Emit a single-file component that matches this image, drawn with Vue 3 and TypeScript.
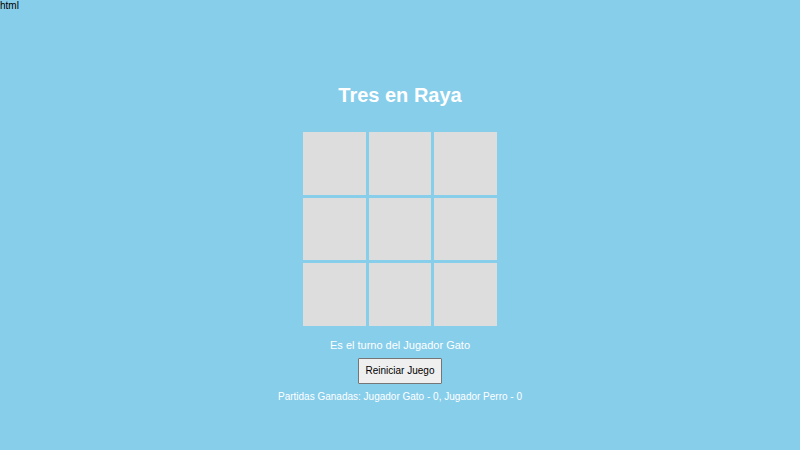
<script setup lang="ts">
import { ref, computed } from 'vue'

type Player = 'Gato' | 'Perro'

const lines = [
  [0, 1, 2], [3, 4, 5], [6, 7, 8],
  [0, 3, 6], [1, 4, 7], [2, 5, 8],
  [0, 4, 8], [2, 4, 6],
]
const symbols: Record<Player, string> = { Gato: '🐱', Perro: '🐶' }

const board = ref<(Player | null)[]>(Array(9).fill(null))
const turn = ref<Player>('Gato')
const winner = ref<Player | null>(null)
const wins = ref<Record<Player, number>>({ Gato: 0, Perro: 0 })

const message = computed(() => {
  if (winner.value) return `¡Jugador ${winner.value} ha ganado!`
  if (board.value.every((cell) => cell)) return '¡Empate!'
  return `Es el turno del Jugador ${turn.value}`
})

function play(index: number) {
  if (board.value[index] || winner.value) return
  board.value[index] = turn.value
  if (lines.some((line) => line.every((i) => board.value[i] === turn.value))) {
    winner.value = turn.value
    wins.value[turn.value]++
    return
  }
  turn.value = turn.value === 'Gato' ? 'Perro' : 'Gato'
}

function reset() {
  board.value = Array(9).fill(null)
  turn.value = 'Gato'
  winner.value = null
}
</script>

<template>
  <div class="page">
    <div class="corner">html</div>
    <main class="game">
      <h1>Tres en Raya</h1>
      <div class="board">
        <button
          v-for="(cell, i) in board"
          :key="i"
          type="button"
          class="cell"
          :aria-label="`Casilla ${i + 1}`"
          @click="play(i)"
        >{{ cell ? symbols[cell] : '' }}</button>
      </div>
      <p class="message">{{ message }}</p>
      <button type="button" class="reset" @click="reset">Reiniciar Juego</button>
      <p class="score">Partidas Ganadas: Jugador Gato - {{ wins.Gato }}, Jugador Perro - {{ wins.Perro }}</p>
    </main>
  </div>
</template>

<style>
body {
  background: #87ceeb;
}
</style>

<style scoped>
.page {
  display: grid;
  min-height: 100vh;
  color: #fff;
  font-family: "Liberation Sans", Arial, sans-serif;
  font-size: 10px;
  line-height: 12px;
}

.corner {
  grid-area: 1 / 1;
  place-self: start;
  color: #000;
}

.game {
  grid-area: 1 / 1;
  display: flex;
  flex-direction: column;
  align-items: center;
  justify-content: center;
  padding-top: 36px;
}

h1 {
  margin: 0 0 25px;
  font-size: 20px;
  line-height: 24px;
}

.board {
  display: grid;
  grid-template-columns: repeat(3, 1fr);
  grid-template-rows: repeat(3, 1fr);
  gap: 3px;
  width: 194px;
  aspect-ratio: 1;
}

.cell {
  padding: 0;
  border: 0;
  border-radius: 0;
  background: #ddd;
  font-size: 30px;
}

.message {
  margin: 12px 0 6px;
  font-size: 11px;
  line-height: 14px;
}

.reset {
  padding: 6px 7px;
  border: 1px solid #767676;
  border-radius: 1px;
  background: #efefef;
  color: #000;
  font: 10px/12px "Liberation Sans", Arial, sans-serif;
}

.score {
  margin: 7px 0 0;
}
</style>
